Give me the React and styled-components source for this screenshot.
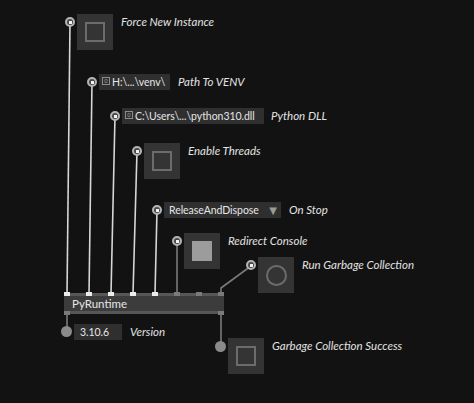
import React from 'react';
import styled, { createGlobalStyle } from 'styled-components';

const GlobalStyle = createGlobalStyle`
  html, body {
    margin: 0;
    padding: 0;
    background: #121212;
  }
  body {
    font-family: Lato, 'Liberation Sans', Arial, sans-serif;
  }
`;

const Canvas = styled.div`
  position: relative;
  width: 474px;
  height: 403px;
  background: #121212;
  overflow: hidden;
`;

const Links = styled.svg`
  position: absolute;
  left: 0;
  top: 0;
`;

// an io box sits on the patch canvas at its own place
const IOBox = styled.div`
  position: absolute;
  left: ${p => p.$x}px;
  top: ${p => p.$y}px;
  display: flex;
  align-items: flex-start;
`;

const InPin = styled.div`
  width: 10px;
  height: 10px;
  margin-top: 3px;
  box-sizing: border-box;
  border-radius: 50%;
  border: 2px solid #b4b4b4;
  background: #4a4a4a;
  display: flex;
  align-items: center;
  justify-content: center;
  flex-shrink: 0;

  &::after {
    content: '';
    width: 3px;
    height: 3px;
    background: #f2f2f2;
  }
`;

const OutPin = styled.div`
  width: 11px;
  height: 11px;
  margin-top: ${p => p.$top || 2}px;
  border-radius: 50%;
  background: #8a8a8a;
  flex-shrink: 0;
`;

const Widget = styled.div`
  margin-left: 2px;
  width: 36px;
  height: 36px;
  background: #343434;
  display: flex;
  align-items: center;
  justify-content: center;
  flex-shrink: 0;
`;

const ToggleMark = styled.div`
  width: 20px;
  height: 20px;
  box-sizing: border-box;
  border: 2px solid ${p => (p.$on ? '#9c9c9c' : '#6c6c6c')};
  background: ${p => (p.$on ? '#9c9c9c' : 'transparent')};
`;

const BangMark = styled.div`
  width: 21px;
  height: 21px;
  box-sizing: border-box;
  border: 2px solid #6c6c6c;
  border-radius: 50%;
`;

const ValueBox = styled.div`
  margin-left: 2px;
  width: ${p => p.$w}px;
  height: 16px;
  box-sizing: border-box;
  padding: 0 2px 0 ${p => p.$pl || 3}px;
  background: #2f2f2f;
  color: #e6e6e6;
  font-size: 10.5px;
  letter-spacing: -0.05px;
  display: flex;
  align-items: center;
  gap: 2px;
  white-space: nowrap;
  overflow: hidden;
  flex-shrink: 0;
`;

const StrIcon = styled.span`
  width: 8px;
  height: 8px;
  box-sizing: border-box;
  border: 1px solid #8c8c8c;
  color: #a0a0a0;
  font-family: 'Liberation Sans', sans-serif;
  font-size: 6px;
  line-height: 6px;
  text-align: center;
  margin-top: -3px;
  flex-shrink: 0;
`;

const EnumArrow = styled.span`
  margin-left: auto;
  margin-right: 2px;
  color: #9a9a9a;
  font-size: 10px;
  font-family: 'DejaVu Sans', sans-serif;
`;

const Label = styled.div`
  margin-left: ${p => p.$gap || 8}px;
  line-height: 16px;
  font-size: 11.5px;
  font-style: italic;
  color: #e2e2e2;
  white-space: nowrap;
`;

const Node = styled.div`
  position: absolute;
  left: 64px;
  top: 293px;
  width: 160px;
  display: flex;
  flex-direction: column;
`;

const PinRow = styled.div`
  height: 3px;
  background: #575757;
  display: flex;
  justify-content: space-between;
  align-items: ${p => (p.$bottom ? 'flex-start' : 'flex-end')};
`;

const NodePin = styled.div`
  width: 6px;
  height: 4px;
  background: ${p => (p.$lit ? '#ececec' : '#7a7a7a')};
  margin-top: ${p => (p.$bottom ? 0 : -1)}px;
`;

const NodeTitle = styled.div`
  height: 15px;
  background: #3c3c3c;
  color: #e6e6e6;
  font-size: 11.5px;
  line-height: 15px;
  padding-left: 8px;
`;

const links = [
  { d: 'M70 22 L67 294', c: '#d6d6d6' },
  { d: 'M92 82 L89 294', c: '#d6d6d6' },
  { d: 'M115 116 L111 294', c: '#d6d6d6' },
  { d: 'M137 151 L133 294', c: '#d6d6d6' },
  { d: 'M157 210 L155 294', c: '#d6d6d6' },
  { d: 'M177 241 L177 294', c: '#7a7a7a' },
  { d: 'M251 266 L221 288 L221 294', c: '#7a7a7a' },
  { d: 'M67 312 L67 332', c: '#7a7a7a' },
  { d: 'M221 312 L221 346', c: '#7a7a7a' },
];

const topPins = [true, true, true, true, true, false, false, false];

export default function App() {
  return (
    <>
      <GlobalStyle />
      <Canvas>
        <Links width="474" height="403">
          {links.map((l, i) => (
            <path key={i} d={l.d} stroke={l.c} strokeWidth="1.6" fill="none" />
          ))}
        </Links>

        <IOBox $x={65} $y={14}>
          <InPin />
          <Widget><ToggleMark /></Widget>
          <Label>Force New Instance</Label>
        </IOBox>

        <IOBox $x={87} $y={74}>
          <InPin />
          <ValueBox $w={71}>
            <StrIcon>0</StrIcon>H:\...\venv\
          </ValueBox>
          <Label>Path To VENV</Label>
        </IOBox>

        <IOBox $x={110} $y={108}>
          <InPin />
          <ValueBox $w={142}>
            <StrIcon>0</StrIcon>C:\Users\...\python310.dll
          </ValueBox>
          <Label $gap={7}>Python DLL</Label>
        </IOBox>

        <IOBox $x={132} $y={143}>
          <InPin />
          <Widget><ToggleMark /></Widget>
          <Label>Enable Threads</Label>
        </IOBox>

        <IOBox $x={152} $y={202}>
          <InPin />
          <ValueBox $w={117} $pl={5}>
            ReleaseAndDispose<EnumArrow>▼</EnumArrow>
          </ValueBox>
          <Label>On Stop</Label>
        </IOBox>

        <IOBox $x={172} $y={233}>
          <InPin />
          <Widget><ToggleMark $on /></Widget>
          <Label>Redirect Console</Label>
        </IOBox>

        <IOBox $x={246} $y={257}>
          <InPin />
          <Widget><BangMark /></Widget>
          <Label>Run Garbage Collection</Label>
        </IOBox>

        <Node>
          <PinRow>
            {topPins.map((lit, i) => <NodePin key={i} $lit={lit} />)}
          </PinRow>
          <NodeTitle>PyRuntime</NodeTitle>
          <PinRow $bottom>
            <NodePin $bottom />
            <NodePin $bottom />
          </PinRow>
        </Node>

        <IOBox $x={61} $y={324}>
          <OutPin $top={2} />
          <ValueBox $w={48} $pl={6}>3.10.6</ValueBox>
          <Label>Version</Label>
        </IOBox>

        <IOBox $x={215} $y={338}>
          <OutPin $top={3} />
          <Widget><ToggleMark /></Widget>
          <Label>Garbage Collection Success</Label>
        </IOBox>
      </Canvas>
    </>
  );
}
